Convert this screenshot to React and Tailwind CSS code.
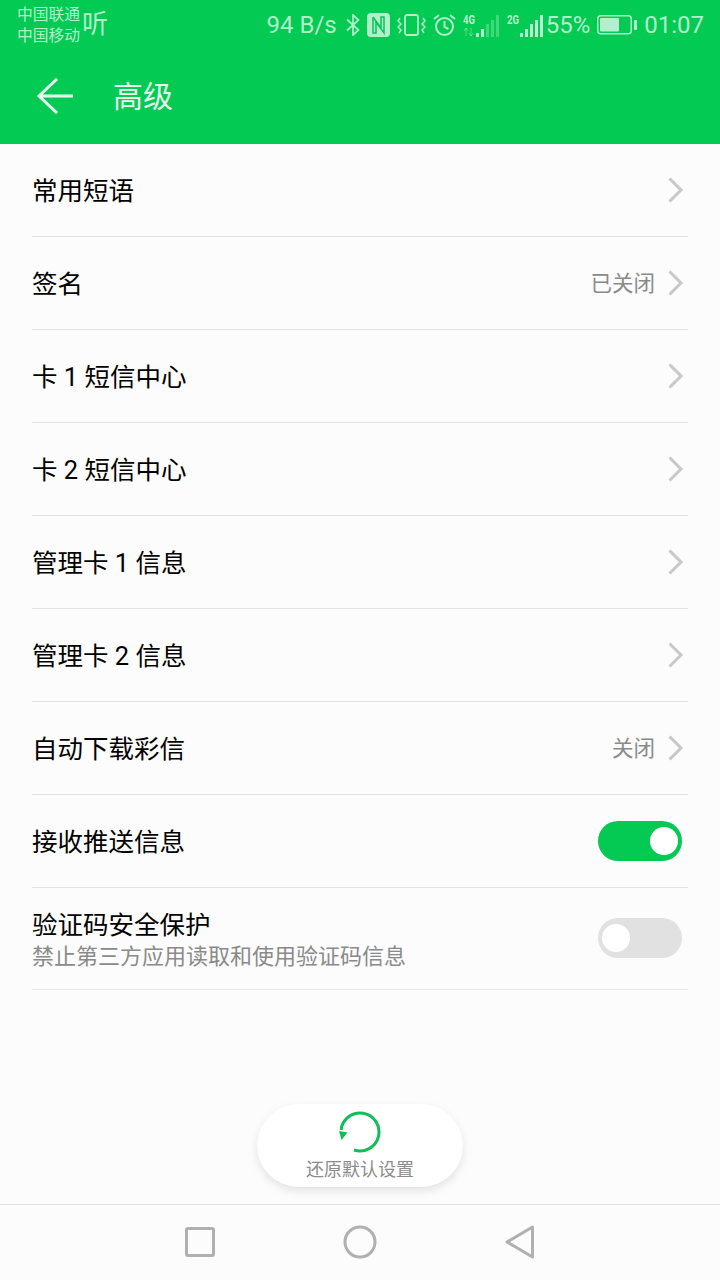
const FONT = "font-['Roboto','Noto_Sans_CJK_SC',sans-serif]";

function Chevron() {
  return (
    <svg width="18" height="28" viewBox="0 0 18 28" fill="none" className="block">
      <path d="M2.5 2.5 L14 14 L2.5 25.5" stroke="#c8c8c8" strokeWidth="3" />
    </svg>
  );
}

function Row({ title, value }) {
  return (
    <div className="h-[93px] border-b border-[#e1e1e1] flex items-center justify-between pr-[3px]">
      <span className="text-[25.5px] leading-[30px] text-black mt-[1px]">{title}</span>
      <div className="flex items-center gap-[12px]">
        {value && <span className="text-[21.5px] leading-[28px] text-[#8a8a8a] mt-[1px]">{value}</span>}
        <Chevron />
      </div>
    </div>
  );
}

function Toggle({ on }) {
  return (
    <div className={`w-[84px] h-[40px] rounded-full px-[4px] py-[6px] flex ${on ? "bg-[#04c952] justify-end" : "bg-[#e1e1e1] justify-start"}`}>
      <div className="w-[28px] h-[28px] rounded-full bg-white" />
    </div>
  );
}

function Signal({ tag, dim }) {
  const heights = [4, 8, 13, 17, 22];
  return (
    <svg width="36" height="26" viewBox="0 0 36 26" className="block">
      <text x="0" y="12" fontSize="12.5" fontWeight="700" fill="#b8f0cf" fontFamily="Roboto" textLength="12" lengthAdjust="spacingAndGlyphs">{tag}</text>
      {dim && (
        <path d="M3 24 V16 L1 19 M3 16 L5 19 M8 16 V24 L6 21 M8 24 L10 21" fill="none" stroke="#b8f0cf" strokeWidth="1" opacity="0.45" />
      )}
      {heights.map((h, i) => (
        <rect key={i} x={13 + i * 5} y={25 - h} width="3" height={h} fill="#b8f0cf" opacity={dim && i > 1 ? 0.35 : 1} />
      ))}
    </svg>
  );
}

function StatusBar() {
  return (
    <div className="h-[48px] pl-[17px] pr-[16px] flex items-center justify-between text-[#b3efcc]">
      <div className="flex items-center gap-[2px]">
        <div className="text-[15.75px] leading-[21px] mt-[1px]">
          <div>中国联通</div>
          <div>中国移动</div>
        </div>
        <span className="text-[26px] leading-[30px] mt-[-1px]">听</span>
      </div>
      <div className="flex items-center text-[24px] leading-[28px] mt-[1px]">
        <span>94 B/s</span>
        <svg width="14" height="22" viewBox="0 0 14 22" fill="none" stroke="#b3efcc" strokeWidth="1.7" className="ml-[9px]">
          <path d="M1 5.5 L12.5 16 L7 21 V1 L12.5 6 L1 16.5" />
        </svg>
        <svg width="23" height="24" viewBox="0 0 23 24" className="ml-[7px]">
          <rect x="0" y="0" width="23" height="24" rx="4" fill="#b3efcc" />
          <path d="M6 4 V20 H9 V9 L17 20 V4 H14 V15 L6 4" stroke="#04c952" strokeWidth="1.5" fill="none" />
        </svg>
        <svg width="29" height="22" viewBox="0 0 29 22" fill="none" stroke="#b3efcc" strokeWidth="1.8" className="ml-[7px]">
          <rect x="8" y="1" width="13" height="20" rx="2" />
          <path d="M3 4 L1 7 L4 10 L1 13 L4 16 L2 19 M26 4 L28 7 L25 10 L28 13 L25 16 L27 19" strokeWidth="1.5" />
        </svg>
        <svg width="23" height="22" viewBox="0 0 23 22" fill="none" stroke="#b3efcc" strokeWidth="2" className="ml-[7px]">
          <circle cx="11.5" cy="12.5" r="8.5" />
          <path d="M11.5 7 V13 L15.5 15 M1 5 L6 1 M22 5 L17 1" />
        </svg>
        <div className="ml-[7px]"><Signal tag="4G" dim /></div>
        <div className="ml-[8px]"><Signal tag="2G" /></div>
        <span className="ml-[3px]">55%</span>
        <svg width="40" height="22" viewBox="0 0 40 22" className="ml-[7px]">
          <rect x="0.75" y="1.75" width="33.5" height="18" rx="3" fill="none" stroke="#b3efcc" strokeWidth="1.5" />
          <rect x="3" y="4" width="19" height="13.5" rx="1" fill="#b3efcc" />
          <rect x="37" y="6" width="3" height="10" rx="1" fill="#b3efcc" />
        </svg>
        <span className="ml-[7px]">01:07</span>
      </div>
    </div>
  );
}

export default function App() {
  const rows = [
    ["常用短语"],
    ["签名", "已关闭"],
    ["卡 1 短信中心"],
    ["卡 2 短信中心"],
    ["管理卡 1 信息"],
    ["管理卡 2 信息"],
    ["自动下载彩信", "关闭"],
  ];
  return (
    <div className={`w-[720px] h-[1280px] bg-[#fcfcfc] flex flex-col overflow-hidden ${FONT}`}>
      <div className="bg-[#02ca52] h-[144px] shrink-0">
        <StatusBar />
        <div className="h-[96px] flex items-center pl-[36px]">
          <svg width="38" height="36" viewBox="0 0 38 36" fill="none" stroke="#e6f9ee" strokeWidth="3" className="block">
            <path d="M21 1 L3 18 L21 35 M3 18 H37" />
          </svg>
          <span className="ml-[39px] text-[30px] leading-[36px] text-[#e6f9ee] mt-[2px]">高级</span>
        </div>
      </div>

      <div className="flex-1 flex flex-col px-[32px]">
        {rows.map(([t, v]) => (
          <Row key={t} title={t} value={v} />
        ))}
        <div className="h-[93px] border-b border-[#e1e1e1] flex items-center justify-between pr-[6px]">
          <span className="text-[25.5px] leading-[30px] text-black mt-[1px]">接收推送信息</span>
          <Toggle on />
        </div>
        <div className="h-[102px] border-b border-[#e9e9e9] flex items-center justify-between pr-[6px] pb-[2px]">
          <div className="flex flex-col mt-[6px]">
            <span className="text-[25.5px] leading-[32px] text-black">验证码安全保护</span>
            <span className="text-[22px] leading-[31px] text-[#8a8a8a]">禁止第三方应用读取和使用验证码信息</span>
          </div>
          <Toggle />
        </div>
      </div>

      <div className="flex justify-center pb-[17px]">
        <div className="w-[206px] h-[83px] rounded-full bg-white shadow-[0_4px_10px_rgba(0,0,0,0.1)] flex flex-col items-center pt-[7px]">
          <svg width="42" height="42" viewBox="0 0 42 42" fill="none" className="block">
            <path d="M15 39 A19 19 0 1 0 2.1 19" stroke="#10bd58" strokeWidth="3" />
            <path d="M0 20 L8.5 21.5 L2.5 29 Z" fill="#10bd58" />
          </svg>
          <span className="text-[18px] leading-[22px] mt-[6px] text-[#8c8c8c]">还原默认设置</span>
        </div>
      </div>

      <div className="h-[76px] shrink-0 border-t border-[#e1e1e1] flex items-center justify-center gap-[128px] pb-[1px]">
        <svg width="30" height="30" viewBox="0 0 30 30" fill="none" stroke="#b0b0b0" strokeWidth="3" strokeLinejoin="round">
          <rect x="1.5" y="1.5" width="27" height="27" rx="1.5" />
        </svg>
        <svg width="34" height="34" viewBox="0 0 34 34" fill="none" stroke="#b0b0b0" strokeWidth="3">
          <circle cx="17" cy="17" r="15" />
        </svg>
        <svg width="30" height="34" viewBox="0 0 30 34" fill="none" stroke="#b0b0b0" strokeWidth="3" strokeLinejoin="round">
          <path d="M27.5 2 V32 L2 17 Z" />
        </svg>
      </div>
    </div>
  );
}
